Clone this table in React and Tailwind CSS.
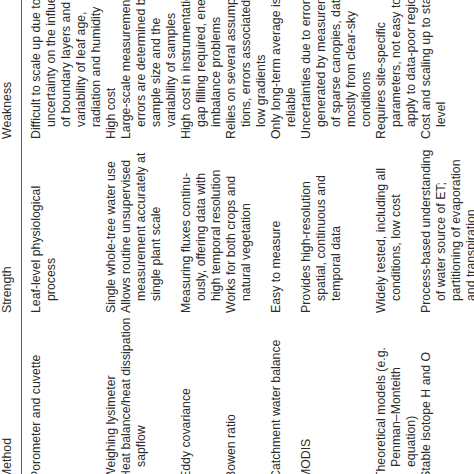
const rows = [
  {
    method: ["Porometer and cuvette"],
    strength: ["Leaf-level physiological", "process"],
    weakness: [
      "Difficult to scale up due to",
      "uncertainty on the influence",
      "of boundary layers and",
      "variability of leaf age,",
      "radiation and humidity",
    ],
  },
  {
    method: ["Weighing lysimeter"],
    strength: ["Single whole-tree water use"],
    weakness: ["High cost"],
  },
  {
    method: ["Heat balance/heat dissipation", "sapflow"],
    strength: [
      "Allows routine unsupervised",
      "measurement accurately at",
      "single plant scale",
    ],
    weakness: [
      "Large-scale measurement",
      "errors are determined by",
      "sample size and the",
      "variability of samples",
    ],
  },
  {
    method: ["Eddy covariance"],
    strength: [
      "Measuring fluxes continu-",
      "ously, offering data with",
      "high temporal resolution",
    ],
    weakness: [
      "High cost in instrumentation,",
      "gap filling required, energy",
      "imbalance problems",
    ],
  },
  {
    method: ["Bowen ratio"],
    strength: ["Works for both crops and", "natural vegetation"],
    weakness: [
      "Relies on several assump-",
      "tions, errors associated with",
      "low gradients",
    ],
  },
  {
    method: ["Catchment water balance"],
    strength: ["Easy to measure"],
    weakness: ["Only long-term average is", "reliable"],
  },
  {
    method: ["MODIS"],
    strength: [
      "Provides high-resolution",
      "spatial, continuous and",
      "temporal data",
    ],
    weakness: [
      "Uncertainties due to errors",
      "generated by measurements",
      "of sparse canopies, data",
      "mostly from clear-sky",
      "conditions",
    ],
  },
  {
    method: ["Theoretical models (e.g.", "Penman\u2013Monteith", "equation)"],
    strength: ["Widely tested, including all", "conditions, low cost"],
    weakness: [
      "Requires site-specific",
      "parameters, not easy to",
      "apply to data-poor regions",
    ],
  },
  {
    method: ["Stable isotope H and O"],
    strength: [
      "Process-based understanding",
      "of water source of ET;",
      "partitioning of evaporation",
      "and transpiration",
    ],
    weakness: ["Cost and scaling up to stand", "level"],
  },
];

function Cell({ lines, className }) {
  return (
    <div className={`shrink-0 ${className}`}>
      {lines.map((line, i) => (
        <div key={i} className={`whitespace-nowrap ${i > 0 ? "pl-[12px]" : ""}`}>
          {line}
        </div>
      ))}
    </div>
  );
}

export default function App() {
  return (
    <div className="w-[474px] h-[474px] overflow-hidden bg-white">
      {/* the table is printed sideways in the source page */}
      <div className="w-[474px] h-[474px] -rotate-90 overflow-hidden font-['Liberation_Sans',Arial,sans-serif] text-[12.3px] leading-[15px] text-[#2b2b2b]">
        <div className="ml-[-5px] w-[620px]">
          <div className="flex h-[22px] border-b border-[#5a5a5a]">
            <div className="w-[166px] shrink-0">Method</div>
            <div className="w-[174px] shrink-0">Strength</div>
            <div className="flex-1">Weakness</div>
          </div>
          <div className="pt-[7px]">
            {rows.map((row, idx) => (
              <div key={idx} className="flex">
                <Cell lines={row.method} className="w-[166px]" />
                <Cell lines={row.strength} className="w-[174px]" />
                <Cell lines={row.weakness} className="flex-1" />
              </div>
            ))}
          </div>
        </div>
      </div>
    </div>
  );
}
